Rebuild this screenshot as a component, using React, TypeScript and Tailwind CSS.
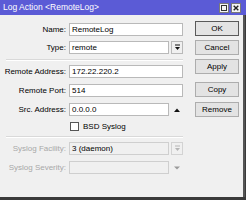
import React from "react";

const font = { fontFamily: '"Liberation Sans", Arial, sans-serif' };

function ComboIcon({ color = "#111" }: { color?: string }) {
  return (
    <svg width="7" height="7" viewBox="0 0 7 7">
      <rect x="1" y="0.5" width="5" height="1" fill={color} />
      <polygon points="1,3 6,3 3.5,6" fill={color} />
    </svg>
  );
}

function Row({
  label,
  children,
  disabled,
}: {
  label: string;
  children: React.ReactNode;
  disabled?: boolean;
}) {
  return (
    <div className="flex items-center h-[13px]">
      <div
        className={
          "w-[67px] pr-[1px] text-right text-[8px] leading-none whitespace-nowrap " +
          (disabled ? "text-[#a8a8a8]" : "text-black")
        }
      >
        {label}
      </div>
      <div className="ml-[2px] flex items-center h-full">{children}</div>
    </div>
  );
}

function Input({
  value,
  w,
  disabled,
}: {
  value?: string;
  w: string;
  disabled?: boolean;
}) {
  return (
    <div
      className={
        "h-[13px] border flex items-center pl-[2px] text-[8px] leading-none " +
        w +
        (disabled
          ? " bg-[#f0f0f0] border-[#cfcfcf] text-black"
          : " bg-white border-[#b9b9b9] text-black")
      }
    >
      {value}
    </div>
  );
}

function Btn({ label, def }: { label: string; def?: boolean }) {
  return (
    <div
      className={
        "h-[15px] w-[44px] flex items-center justify-center text-[8px] leading-none text-black bg-[#e3e3e3] border " +
        (def ? "border-[#5a5a5a]" : "border-[#adadad]")
      }
    >
      {label}
    </div>
  );
}

function Sep() {
  return (
    <div className="ml-[6px] w-[177px] h-[1px] bg-[#d9d9d9] border-b border-white box-content" />
  );
}

export default function App() {
  return (
    <div className="w-[246px] h-[200px] bg-[#3a3a3a] overflow-hidden" style={font}>
      <div className="w-[246px] h-[197px] flex flex-col">
        <div className="h-[15px] bg-[#5b5bd6] flex items-center pl-[3px] pr-[5px]">
          <div className="text-white text-[8.5px] leading-none flex-1 whitespace-nowrap">
            Log Action &lt;RemoteLog&gt;
          </div>
          <div className="flex gap-[2px] mt-[1px]">
            <div className="w-[10px] h-[10px] bg-[#f4f4f4] border border-[#7a7a7a] flex items-center justify-center">
              <div className="w-[6px] h-[6px] border border-[#333]" />
            </div>
            <div className="w-[10px] h-[10px] bg-[#f4f4f4] border border-[#7a7a7a] flex items-center justify-center">
              <svg width="6" height="6" viewBox="0 0 6 6">
                <path d="M0.7 0.7 L5.3 5.3 M5.3 0.7 L0.7 5.3" stroke="#222" strokeWidth="1.4" />
              </svg>
            </div>
          </div>
        </div>
        <div className="flex-1 flex bg-[#f0f0f0] border-r-[2px] border-[#555] mr-[1px]">
          <div className="w-[195px] flex flex-col pt-[8px]">
            <Row label="Name:">
              <Input value="RemoteLog" w="w-[114px]" />
            </Row>
            <div className="h-[5px]" />
            <Row label="Type:">
              <Input value="remote" w="w-[100px]" />
              <div className="ml-[2px] w-[12px] h-[13px] border border-[#b9b9b9] bg-[#f0f0f0] flex items-center justify-center">
                <ComboIcon />
              </div>
            </Row>
            <div className="h-[5px]" />
            <Sep />
            <div className="h-[4px]" />
            <Row label="Remote Address:">
              <Input value="172.22.220.2" w="w-[114px]" />
            </Row>
            <div className="h-[6px]" />
            <Row label="Remote Port:">
              <Input value="514" w="w-[114px]" />
            </Row>
            <div className="h-[6px]" />
            <Row label="Src. Address:">
              <Input value="0.0.0.0" w="w-[100px]" />
              <div className="ml-[2px] w-[12px] h-[13px] flex items-center justify-center">
                <svg width="6" height="4" viewBox="0 0 6 4">
                  <polygon points="0,4 6,4 3,0.5" fill="#111" />
                </svg>
              </div>
            </Row>
            <div className="h-[6px]" />
            <div className="flex items-center h-[9px] pl-[70px]">
              <div className="w-[9px] h-[9px] bg-white border border-[#555]" />
              <div className="ml-[4px] text-[8px] leading-none text-black">BSD Syslog</div>
            </div>
            <div className="h-[5px]" />
            <Sep />
            <div className="h-[4px]" />
            <Row label="Syslog Facility:" disabled>
              <Input value="3 (daemon)" w="w-[100px]" disabled />
              <div className="ml-[2px] w-[12px] h-[13px] border border-[#d3d3d3] bg-[#f0f0f0] flex items-center justify-center">
                <ComboIcon color="#b5b5b5" />
              </div>
            </Row>
            <div className="h-[6px]" />
            <Row label="Syslog Severity:" disabled>
              <Input w="w-[100px]" disabled />
              <div className="ml-[2px] w-[12px] h-[13px] flex items-center justify-center">
                <svg width="6" height="4" viewBox="0 0 6 4">
                  <polygon points="0,0.5 6,0.5 3,3.5" fill="#9a9a9a" />
                </svg>
              </div>
            </Row>
          </div>
          <div className="flex flex-col pt-[6px]">
            <Btn label="OK" def />
            <div className="h-[4px]" />
            <Btn label="Cancel" />
            <div className="h-[4px]" />
            <Btn label="Apply" />
            <div className="h-[8px]" />
            <Btn label="Copy" />
            <div className="h-[5px]" />
            <Btn label="Remove" />
          </div>
        </div>
      </div>
    </div>
  );
}
